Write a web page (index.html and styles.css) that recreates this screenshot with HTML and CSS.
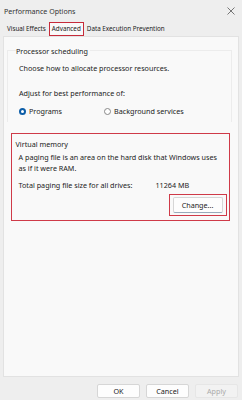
FILE: index.html
```html
<!DOCTYPE html>
<html>
<head>
<meta charset="utf-8">
<link rel="stylesheet" href="styles.css">
</head>
<body>
<div class="window">
  <div class="titlebar">
    <span class="title">Performance Options</span>
    <svg class="close" width="8" height="8" viewBox="0 0 8 8"><path d="M0.5 0.5 L7.5 7.5 M7.5 0.5 L0.5 7.5" stroke="#555" stroke-width="0.8"/></svg>
  </div>
  <div class="tabs">
    <span class="tab">Visual Effects</span>
    <span class="tab active">Advanced</span>
    <span class="tab">Data Execution Prevention</span>
  </div>
  <div class="panel">
    <div class="group proc">
      <div class="legend">Processor scheduling</div>
      <p class="line first">Choose how to allocate processor resources.</p>
      <p class="line adjust">Adjust for best performance of:</p>
      <div class="radios">
        <label class="radio"><span class="dot on"></span>Programs</label>
        <label class="radio bg"><span class="dot"></span>Background services</label>
      </div>
    </div>
    <div class="group vm">
      <div class="legend">Virtual memory</div>
      <p class="line para">A paging file is an area on the hard disk that Windows uses as if it were RAM.</p>
      <div class="total"><span class="tlabel">Total paging file size for all drives:</span><span>11264 MB</span></div>
      <div class="changerow"><span class="changebox"><span class="btn change">Change...</span></span></div>
    </div>
  </div>
  <div class="footer">
    <span class="btn fbtn">OK</span>
    <span class="btn fbtn">Cancel</span>
    <span class="btn fbtn disabled">Apply</span>
  </div>
</div>
</body>
</html>
```

FILE: styles.css
```css
html, body {
  margin: 0;
  padding: 0;
  background: #eeeeee;
}
body {
  font-family: "Noto Sans", "Open Sans", sans-serif;
  font-size: 7.2px;
  color: #222;
  width: 242px;
  height: 400px;
  overflow: hidden;
}
.window {
  display: flex;
  flex-direction: column;
  height: 400px;
}
.titlebar {
  height: 21px;
  display: flex;
  align-items: center;
  justify-content: space-between;
  padding: 0 7px 0 4px;
}
.title {
  font-size: 7.1px;
  color: #333;
}
.tabs {
  display: flex;
  align-items: center;
  height: 15px;
  padding-left: 6px;
  gap: 2px;
  font-size: 6.3px;
}
.tab {
  padding: 0 1px;
  line-height: 12px;
  color: #222;
  white-space: nowrap;
}
.tab.active {
  border: 1.5px solid #c62b3a;
  background: #f9f9f9;
  padding: 0 2px;
}
.panel {
  margin: 0 3px;
  background: #f9f9f9;
  border: 1px solid #e2e2e2;
  height: 341px;
  box-sizing: border-box;
  padding: 13px 6px 0 7px;
}
.proc {
  border: 1px solid #ececec;
  border-bottom: none;
  padding: 0 0 6px 11px;
  margin-left: -4px;
}
.legend {
  margin-left: -3px;
  margin-top: -5px;
  line-height: 10px;
  color: #222;
  background: #f9f9f9;
  width: max-content;
  padding-right: 2px;
}
.line {
  margin: 0;
  line-height: 11px;
}
.first {
  margin-top: 6.5px;
}
.adjust {
  margin-top: 14px;
}
.radios {
  display: flex;
  margin-top: 7.5px;
  line-height: 10px;
  white-space: nowrap;
}
.radio {
  display: flex;
  align-items: center;
  width: 85px;
}
.dot {
  width: 7px;
  height: 7px;
  border: 1px solid #888;
  border-radius: 50%;
  margin-right: 3px;
  box-sizing: border-box;
  background: #fff;
}
.dot.on {
  border: 2.3px solid #0d5ea8;
  background: #fff;
}
.vm {
  margin-top: 11px;
  margin-left: 0;
  margin-right: 2px;
  border: 1.5px solid #cf3a48;
  padding: 4.5px 2.5px 2.5px 6.5px;
  height: 88px;
  box-sizing: border-box;
}
.vm .legend {
  margin: 0 0 0 -3px;
}
.para {
  margin-top: 3.5px;
  padding-right: 7px;
}
.total {
  display: flex;
  margin-top: 6px;
  line-height: 11px;
}
.tlabel {
  width: 137px;
}
.changerow {
  display: flex;
  justify-content: flex-end;
  margin-top: 2.5px;
}
.changebox {
  border: 1.5px solid #cf3a48;
  padding: 2px 3px;
}
.btn {
  display: inline-flex;
  align-items: center;
  justify-content: center;
  background: #fdfdfd;
  border: 1px solid #d6d6d6;
  border-radius: 2px;
  height: 14px;
  box-sizing: border-box;
}
.change {
  width: 50px;
  height: 16px;
  border-bottom-color: #9ab;
}
.footer {
  display: flex;
  justify-content: flex-end;
  gap: 6px;
  padding: 7px 4px 0 0;
}
.fbtn {
  width: 43px;
}
.disabled {
  color: #aaa;
  background: #f2f2f2;
  border-color: #e6e6e6;
}
```
